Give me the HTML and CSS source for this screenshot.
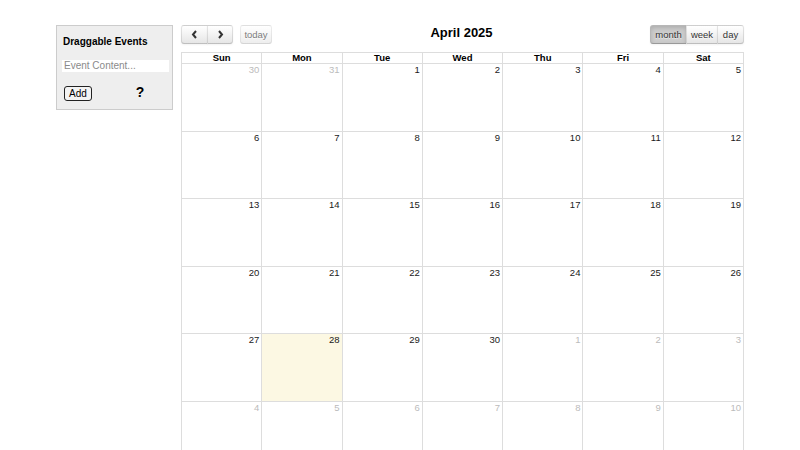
FILE: index.html
```html
<!DOCTYPE html>
<html>
<head>
<meta charset="utf-8">
<link rel="stylesheet" href="styles.css">
</head>
<body>
<div class="page">
  <div class="external">
    <h4 class="ext-title">Draggable Events</h4>
    <input class="ext-input" type="text" placeholder="Event Content...">
    <div class="ext-actions">
      <button class="add-btn">Add</button>
      <span class="help">?</span>
    </div>
  </div>
  <div class="cal">
    <div class="toolbar">
      <div class="tb-left">
        <div class="btn-group">
          <button class="fc-btn first prev"><svg width="7" height="9" viewBox="0 0 7 9"><polyline points="5,1 2,4.5 5,8" fill="none" stroke="#333" stroke-width="2"/></svg></button><button class="fc-btn last next"><svg width="7" height="9" viewBox="0 0 7 9"><polyline points="2,1 5,4.5 2,8" fill="none" stroke="#333" stroke-width="2"/></svg></button>
        </div>
        <button class="fc-btn single disabled">today</button>
      </div>
      <h2 class="title">April 2025</h2>
      <div class="tb-right">
        <div class="btn-group">
          <button class="fc-btn first active month">month</button><button class="fc-btn week">week</button><button class="fc-btn last day">day</button>
        </div>
      </div>
    </div>
    <div class="head">
      <div class="hcell">Sun</div><div class="hcell">Mon</div><div class="hcell">Tue</div><div class="hcell">Wed</div><div class="hcell">Thu</div><div class="hcell">Fri</div><div class="hcell">Sat</div>
    </div>
    <div class="grid">
      <div class="cell other">30</div><div class="cell other">31</div><div class="cell">1</div><div class="cell">2</div><div class="cell">3</div><div class="cell">4</div><div class="cell">5</div>
      <div class="cell">6</div><div class="cell">7</div><div class="cell">8</div><div class="cell">9</div><div class="cell">10</div><div class="cell">11</div><div class="cell">12</div>
      <div class="cell">13</div><div class="cell">14</div><div class="cell">15</div><div class="cell">16</div><div class="cell">17</div><div class="cell">18</div><div class="cell">19</div>
      <div class="cell">20</div><div class="cell">21</div><div class="cell">22</div><div class="cell">23</div><div class="cell">24</div><div class="cell">25</div><div class="cell">26</div>
      <div class="cell">27</div><div class="cell today">28</div><div class="cell">29</div><div class="cell">30</div><div class="cell other">1</div><div class="cell other">2</div><div class="cell other">3</div>
      <div class="cell other">4</div><div class="cell other">5</div><div class="cell other">6</div><div class="cell other">7</div><div class="cell other">8</div><div class="cell other">9</div><div class="cell other">10</div>
    </div>
  </div>
</div>
</body>
</html>
```
FILE: styles.css
```css
html, body {
  margin: 0;
  padding: 0;
  overflow: hidden;
  background: #fff;
  font-family: "Liberation Sans", Arial, sans-serif;
  color: #000;
}
.page {
  display: flex;
  align-items: flex-start;
  gap: 8px;
  padding: 25px 0 0 56px;
}
.external {
  width: 117px;
  box-sizing: border-box;
  border: 1px solid #ccc;
  background: #eee;
  padding: 0 4px 8px 5px;
}
.ext-title {
  margin: 10px 0 0 1px;
  font-size: 10px;
  line-height: 12px;
  font-weight: bold;
}
.ext-input {
  display: block;
  width: 107px;
  height: 12px;
  box-sizing: border-box;
  margin: 12px 0 0 0;
  padding: 0 2px;
  border: none;
  outline: none;
  background: #fff;
  font-family: inherit;
  font-size: 10px;
  line-height: 12px;
}
.ext-input::placeholder {
  color: #8a8a8a;
}
.ext-actions {
  display: flex;
  align-items: center;
  margin-top: 14px;
}
.add-btn {
  margin: 0 0 0 2px;
  height: 15px;
  padding: 0 4px;
  border: 1px solid #222;
  border-radius: 3px;
  background: #f3f3f3;
  font-family: inherit;
  font-size: 10px;
  line-height: 13px;
  color: #000;
}
.help {
  margin-left: 44px;
  font-size: 14px;
  font-weight: bold;
  line-height: 14px;
  margin-top: -4px;
}
.cal {
  width: 563px;
}
.toolbar {
  display: grid;
  grid-template-columns: 1fr auto 1fr;
  align-items: center;
  height: 19px;
  margin-bottom: 8px;
}
.tb-left {
  display: flex;
  align-items: center;
  gap: 7px;
}
.tb-right {
  display: flex;
  justify-content: flex-end;
}
.btn-group {
  display: flex;
}
.title {
  margin: 0;
  font-size: 13px;
  line-height: 16px;
  font-weight: bold;
  margin-top: -4px;
  margin-right: 2px;
}
.fc-btn {
  height: 19px;
  margin: 0;
  box-sizing: border-box;
  padding: 0 5px;
  border: 1px solid;
  border-color: rgba(0,0,0,0.1) rgba(0,0,0,0.1) rgba(0,0,0,0.25);
  background: linear-gradient(#fff, #e6e6e6);
  box-shadow: inset 0 1px 0 rgba(255,255,255,0.2), 0 1px 2px rgba(0,0,0,0.05);
  color: #333;
  font-family: inherit;
  font-size: 9.5px;
  line-height: 17px;
  text-shadow: 0 1px 1px rgba(255,255,255,0.75);
  display: flex;
  align-items: center;
  justify-content: center;
}
.fc-btn + .fc-btn {
  margin-left: -1px;
}
.fc-btn.first { border-radius: 3px 0 0 3px; }
.fc-btn.last { border-radius: 0 3px 3px 0; }
.fc-btn.single { border-radius: 3px; }
.prev { width: 27px; }
.next { width: 26px; }
.single { width: 32px; }
.month { width: 37px; }
.week { width: 32px; }
.day { width: 27px; }
.fc-btn.disabled {
  opacity: 0.65;
  box-shadow: none;
}
.fc-btn.active {
  background: #ccc;
  box-shadow: inset 0 2px 4px rgba(0,0,0,0.15), 0 1px 2px rgba(0,0,0,0.05);
}
.head {
  display: grid;
  grid-template-columns: repeat(7, 1fr);
  border-top: 1px solid #ddd;
  border-left: 1px solid #ddd;
}
.hcell {
  border-right: 1px solid #ddd;
  border-bottom: 1px solid #ddd;
  text-align: center;
  font-size: 9.5px;
  font-weight: bold;
  line-height: 10px;
  height: 10px;
}
.grid {
  display: grid;
  grid-template-columns: repeat(7, 1fr);
  grid-auto-rows: 67.5px;
  border-left: 1px solid #ddd;
}
.cell {
  box-sizing: border-box;
  border-right: 1px solid #ddd;
  border-bottom: 1px solid #ddd;
  text-align: right;
  padding: 0 2px 0 0;
  font-size: 9.5px;
  line-height: 11px;
  color: #1a1a1a;
}
.cell.other {
  color: #bbb;
}
.cell.today {
  background: #fcf8e3;
}
```
